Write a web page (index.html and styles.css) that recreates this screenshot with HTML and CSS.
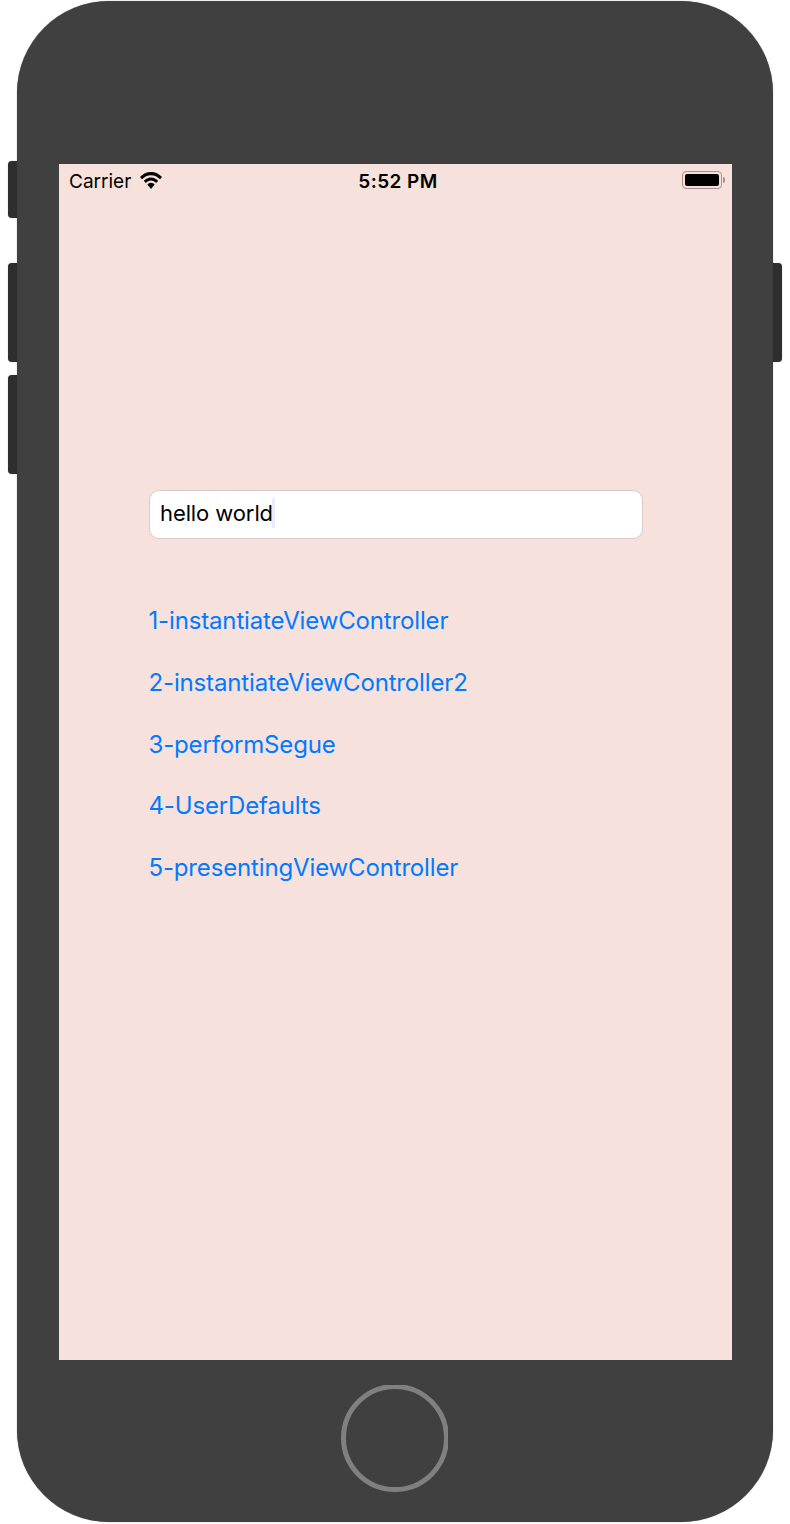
FILE: index.html
```html
<!DOCTYPE html>
<html lang="en">
<head>
<meta charset="utf-8">
<title>Simulator</title>
<link rel="stylesheet" href="styles.css">
</head>
<body>
<div class="phone">
  <span class="side side-mute"></span>
  <span class="side side-up"></span>
  <span class="side side-down"></span>
  <span class="side side-power"></span>
  <main class="screen">
    <header class="status">
      <div class="status-left">
        <span class="carrier">Carrier</span>
        <svg class="wifi" width="22" height="17" viewBox="1.4 2 21.2 14.4" preserveAspectRatio="none"><path d="M12 2C7.8 2 4.2 3.6 1.4 6.2L3.3 8.2C5.6 6 8.6 4.7 12 4.7S18.4 6 20.7 8.2L22.6 6.2C19.8 3.6 16.2 2 12 2Z"/><path d="M12 6.6C9.3 6.6 6.9 7.7 5.1 9.4L7 11.4C8.3 10.1 10.1 9.3 12 9.3S15.7 10.1 17 11.4L18.9 9.4C17.1 7.7 14.7 6.6 12 6.6Z"/><path d="M12 11.1C10.6 11.1 9.4 11.7 8.5 12.6L12 16.4L15.5 12.6C14.6 11.7 13.4 11.1 12 11.1Z"/></svg>
      </div>
      <time class="clock">5:52 PM</time>
      <div class="battery"><span class="battery-body"><span class="battery-fill"></span></span><span class="battery-cap"></span></div>
    </header>
    <div class="content">
      <div class="field"><span class="field-text">hello world</span><span class="caret"></span></div>
      <nav class="links">
        <a class="link">1-instantiateViewController</a>
        <a class="link">2-instantiateViewController2</a>
        <a class="link">3-performSegue</a>
        <a class="link">4-UserDefaults</a>
        <a class="link">5-presentingViewController</a>
      </nav>
    </div>
  </main>
  <div class="home-row"><div class="home-clip"><span class="home"></span></div></div>
</div>
</body>
</html>
```

FILE: styles.css
```css
* { box-sizing: border-box; }
html, body { margin: 0; padding: 0; background: #fff; }
body { height: 1524px; overflow: hidden; padding: 1px 17px 0; font-family: Inter, "Liberation Sans", sans-serif; }

.phone {
  position: relative;
  width: 756px;
  height: 1521px;
  padding: 163px 41px 0 42px;
  background: #404040;
  border-radius: 92px;
  box-shadow: 0 0 1px rgba(0, 0, 0, 0.6);
}

.side { position: absolute; background: #2e2e2e; box-shadow: 0 0 1px rgba(0,0,0,.5); }
.side-mute, .side-up, .side-down { left: -9px; width: 9px; border-radius: 4px 0 0 4px; }
.side-mute { top: 160px; height: 57px; }
.side-up { top: 262px; height: 99px; }
.side-down { top: 374px; height: 99px; }
.side-power { right: -9px; top: 262px; width: 9px; height: 99px; border-radius: 0 4px 4px 0; }

.screen { display: block; width: 673px; height: 1196px; background: #f6e1dc; }

.status {
  position: relative;
  display: flex;
  justify-content: space-between;
  align-items: center;
  height: 34px;
  padding: 0 7px 0 10px;
  color: #000;
}
.status-left { display: flex; align-items: center; gap: 9px; }
.carrier { font-size: 19px; line-height: 34px; margin-top: 2px; }
.wifi { display: block; fill: #000; margin-top: -1px; }
.clock { position: absolute; left: 5px; right: 0; top: 1px; text-align: center; font-size: 19px; font-weight: 600; letter-spacing: 0.45px; line-height: 34px; }
.battery { display: flex; align-items: center; margin-top: -2px; }
.battery-body { display: block; width: 40px; height: 18px; padding: 2px; border: 1.5px solid #a98f8d; border-radius: 4px; }
.battery-fill { display: block; height: 100%; background: #000; border-radius: 2px; }
.battery-cap { display: block; width: 2px; height: 6px; margin-left: 1px; background: #a98f8d; border-radius: 0 2px 2px 0; }

.content { padding: 292px 0 0 90px; }

.field {
  display: flex;
  align-items: center;
  width: 494px;
  height: 49px;
  padding: 0 10px 3px;
  background: #fff;
  border: 1px solid #dcc9c8;
  border-radius: 10px;
  color: #000;
  font-size: 22px;
  letter-spacing: -0.1px;
}
.caret { width: 3px; height: 30px; background: #e8ecfb; margin-left: -1px; }

.links { display: flex; flex-direction: column; gap: 23.75px; padding-top: 63px; }
.link { display: block; height: 38px; margin-left: -0.5px; color: #007aff; font-size: 24px; letter-spacing: -0.15px; line-height: 38px; }

.home-row { display: flex; justify-content: center; padding: 25px 2px 0 0; }
.home-clip { width: 107px; height: 107px; overflow: hidden; }
.home { display: block; width: 108px; height: 108px; margin-top: -1px; border: 5px solid #808080; border-radius: 50%; }
```
